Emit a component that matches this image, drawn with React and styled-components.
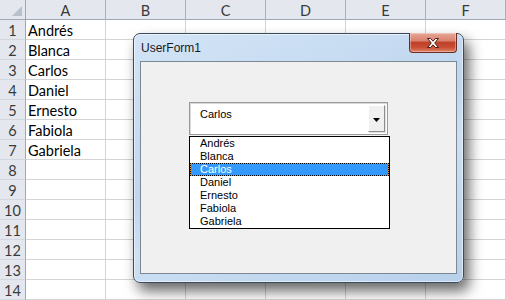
import React from "react";
import styled, { createGlobalStyle } from "styled-components";

const GlobalStyle = createGlobalStyle`
  html, body {
    margin: 0;
    padding: 0;
    background: #fff;
    overflow: hidden;
  }
  * {
    box-sizing: border-box;
  }
`;

const names = ["Andrés", "Blanca", "Carlos", "Daniel", "Ernesto", "Fabiola", "Gabriela"];
const columns = ["A", "B", "C", "D", "E", "F"];
const rowCount = 14;

const Page = styled.div`
  position: relative;
  width: 506px;
  height: 300px;
  overflow: hidden;
`;

const Grid = styled.div`
  display: grid;
  grid-template-columns: 26px repeat(6, 80px);
  grid-template-rows: 20px repeat(${(p) => p.$rows}, 20px);
  font-family: Lato, "Liberation Sans", sans-serif;
  font-size: 14.5px;
  color: #000;
`;

const Corner = styled.div`
  position: relative;
  background: #e4e8ee;
  border-right: 1px solid #9ea8b4;
  border-bottom: 1px solid #9ea8b4;

  &::after {
    content: "";
    position: absolute;
    right: 3px;
    bottom: 3px;
    width: 10px;
    height: 10px;
    background: #b9c0c9;
    clip-path: polygon(100% 0, 100% 100%, 0 100%);
  }
`;

const ColHeader = styled.div`
  display: flex;
  align-items: center;
  justify-content: center;
  background: #e4e8ee;
  border-right: 1px solid #a6afba;
  border-bottom: 1px solid #9ea8b4;
  color: #3a3a3a;
  padding-top: 1px;
`;

const RowHeader = styled.div`
  display: flex;
  align-items: center;
  justify-content: center;
  background: #e4e8ee;
  border-right: 1px solid #9ea8b4;
  border-bottom: 1px solid #d3d8de;
  color: #3a3a3a;
  padding-top: 1px;
`;

const Cell = styled.div`
  display: flex;
  align-items: center;
  padding: 1px 0 0 2px;
  border-right: 1px solid #d4d4d4;
  border-bottom: 1px solid #d4d4d4;
  white-space: nowrap;
`;

const Window = styled.div`
  position: absolute;
  left: 133px;
  top: 33px;
  width: 331px;
  height: 250px;
  display: flex;
  flex-direction: column;
  padding: 0 6px 8px 6px;
  border: 1px solid #3a4b5e;
  border-radius: 7px;
  background: linear-gradient(160deg, #d3e4f6 0%, #bfd6ef 45%, #cde0f4 60%, #b7d0eb 100%);
  box-shadow: 5px 8px 14px rgba(0, 0, 0, 0.6), inset 0 0 0 1px rgba(255, 255, 255, 0.55);
`;

const TitleBar = styled.div`
  height: 27px;
  display: flex;
  align-items: center;
  padding-left: 1px;
  font-family: "Liberation Sans", Arial, sans-serif;
  font-size: 12px;
  color: #1a1a1a;
`;

const CloseButton = styled.div`
  position: absolute;
  top: -1px;
  right: 6px;
  width: 48px;
  height: 20px;
  display: flex;
  align-items: center;
  justify-content: center;
  border: 1px solid #6b2b22;
  border-top: none;
  border-radius: 0 0 4px 4px;
  background: linear-gradient(#e8a696 0%, #d9836f 40%, #c0412a 50%, #c84c33 75%, #e0866a 100%);
  box-shadow: inset 0 0 0 1px rgba(255, 255, 255, 0.35);
`;

const Client = styled.div`
  flex: 1;
  display: flex;
  flex-direction: column;
  align-items: flex-start;
  padding: 40px 0 0 48px;
  background: #f0f0f0;
  border: 1px solid #7d8895;
`;

const Combo = styled.div`
  width: 199px;
  height: 33px;
  display: flex;
  justify-content: space-between;
  padding: 2px;
  background: #fff;
  border: 1px solid #9a9a9a;
  box-shadow: inset 1px 1px 0 #d8d8d8;
`;

const ComboText = styled.div`
  padding: 3px 0 0 8px;
  font-family: "Liberation Sans", Arial, sans-serif;
  font-size: 11px;
  line-height: 13px;
  color: #000;
`;

const DropButton = styled.div`
  width: 17px;
  display: flex;
  align-items: center;
  justify-content: center;
  padding-top: 2px;
  background: #f0f0f0;
  border: 1px solid;
  border-color: #fff #8e8e8e #8e8e8e #fff;
  box-shadow: 1px 1px 0 #e0e0e0;
`;

const List = styled.div`
  width: 201px;
  margin-top: 1px;
  border: 1px solid #000;
  background: #fff;
  font-family: "Liberation Sans", Arial, sans-serif;
  font-size: 11px;
`;

const Item = styled.div`
  height: 13px;
  line-height: 11px;
  padding-left: 9px;
  border: 1px solid transparent;
  white-space: nowrap;
  color: ${(p) => (p.$selected ? "#fff" : "#000")};
  ${(p) =>
    p.$selected &&
    `
    border: 1px dotted #000;
    background: linear-gradient(#3399ff, #3399ff) padding-box, #e8902a border-box;
  `}
`;

function CloseIcon() {
  return (
    <svg width="14" height="12" viewBox="0 0 14 12">
      <path
        d="M1.5 1.5 L4.5 1.5 L7 4.2 L9.5 1.5 L12.5 1.5 L8.7 6 L12.5 10.5 L9.5 10.5 L7 7.8 L4.5 10.5 L1.5 10.5 L5.3 6 Z"
        fill="#fff"
        stroke="#4a1b14"
        strokeWidth="1"
        strokeLinejoin="round"
      />
    </svg>
  );
}

function ArrowIcon() {
  return (
    <svg width="7" height="4" viewBox="0 0 7 4">
      <path d="M0 0 H7 L3.5 4 Z" fill="#000" />
    </svg>
  );
}

export default function App() {
  const rows = Array.from({ length: rowCount }, (_, i) => i + 1);
  return (
    <Page>
      <GlobalStyle />
      <Grid $rows={rowCount}>
        <Corner />
        {columns.map((c) => (
          <ColHeader key={c}>{c}</ColHeader>
        ))}
        {rows.map((r) => (
          <React.Fragment key={r}>
            <RowHeader>{r}</RowHeader>
            {columns.map((c) => (
              <Cell key={c}>{c === "A" ? names[r - 1] || "" : ""}</Cell>
            ))}
          </React.Fragment>
        ))}
      </Grid>

      <Window>
        <TitleBar>UserForm1</TitleBar>
        <CloseButton>
          <CloseIcon />
        </CloseButton>
        <Client>
          <Combo>
            <ComboText>Carlos</ComboText>
            <DropButton>
              <ArrowIcon />
            </DropButton>
          </Combo>
          <List>
            {names.map((n) => (
              <Item key={n} $selected={n === "Carlos"}>
                {n}
              </Item>
            ))}
          </List>
        </Client>
      </Window>
    </Page>
  );
}
